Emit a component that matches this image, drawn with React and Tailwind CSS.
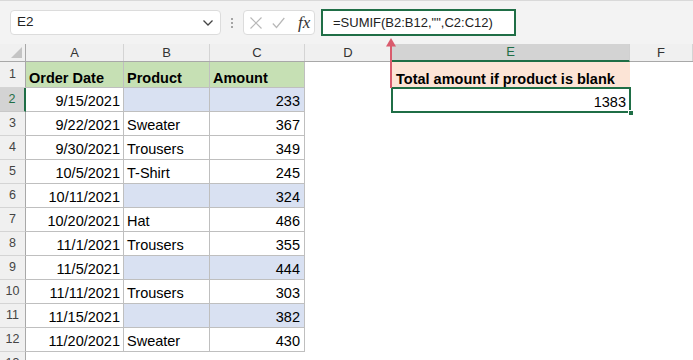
import React from 'react';

const COLS = [
  { key: 'A', w: 'w-[98px]' },
  { key: 'B', w: 'w-[86px]' },
  { key: 'C', w: 'w-[95px]' },
  { key: 'D', w: 'w-[87px]' },
  { key: 'E', w: 'w-[238px]' },
  { key: 'F', w: 'w-[63px]' },
];

const rows = [
  ['9/15/2021', '', 233],
  ['9/22/2021', 'Sweater', 367],
  ['9/30/2021', 'Trousers', 349],
  ['10/5/2021', 'T-Shirt', 245],
  ['10/11/2021', '', 324],
  ['10/20/2021', 'Hat', 486],
  ['11/1/2021', 'Trousers', 355],
  ['11/5/2021', '', 444],
  ['11/11/2021', 'Trousers', 303],
  ['11/15/2021', '', 382],
  ['11/20/2021', 'Sweater', 430],
];

const FormulaBar = () => (
  <div className="h-[44px] bg-[#f3f3f3] border-t border-[#d9d9d9] flex items-center pl-[10px]">
    {/* name box */}
    <div className="w-[211px] h-[25px] bg-white border border-[#dcdcdc] rounded-[4px] flex items-center justify-between pl-[6px] pr-[6px]">
      <span className="text-[13.5px] text-[#222]">E2</span>
      <svg width="12" height="8" viewBox="0 0 12 8">
        <path d="M1.5 1.5 L6 6 L10.5 1.5" fill="none" stroke="#444" strokeWidth="1.3" />
      </svg>
    </div>
    <div className="w-[22px] flex flex-col items-center gap-[2px]">
      <span className="w-[2px] h-[2px] bg-[#8a8a8a] rounded-full" />
      <span className="w-[2px] h-[2px] bg-[#8a8a8a] rounded-full" />
      <span className="w-[2px] h-[2px] bg-[#8a8a8a] rounded-full" />
    </div>
    {/* cancel / enter / fx */}
    <div className="w-[72px] h-[25px] bg-white border border-[#dcdcdc] rounded-[4px] flex items-center pl-[4px]">
      <svg width="14" height="14" viewBox="0 0 14 14" className="ml-[1px]">
        <path d="M1.5 1.5 L12.5 12.5 M12.5 1.5 L1.5 12.5" stroke="#b8b8b8" strokeWidth="1.2" />
      </svg>
      <svg width="13" height="12" viewBox="0 0 13 12" className="ml-[9px]">
        <path d="M0.8 6.5 L4.5 10.5 L12.3 1" fill="none" stroke="#b8b8b8" strokeWidth="1.2" />
      </svg>
      <span className="ml-[13px] font-['Liberation_Serif',serif] italic text-[17px] leading-none text-[#333]">fx</span>
    </div>
    {/* formula input */}
    <div className="ml-[6px] w-[195px] h-[27px] bg-white border-2 border-[#1f6e46] flex items-center pl-[10px]">
      <span className="text-[13px] text-[#222]">=SUMIF(B2:B12,"",C2:C12)</span>
    </div>
  </div>
);

const HeaderRow = () => (
  <div className="flex h-[18px] bg-[#f0f0f0] border-b border-[#a8a8a8]">
    <div className="w-[26px] border-r border-[#a8a8a8] flex items-end justify-end pr-[3px] pb-[3px]">
      <svg width="11" height="11" viewBox="0 0 11 11">
        <path d="M11 0 L11 11 L0 11 Z" fill="#c4c4c4" />
      </svg>
    </div>
    {COLS.map((c) =>
      c.key === 'E' ? (
        <div
          key={c.key}
          className={`${c.w} bg-[#d3d3d3] border-r border-[#d0d0d0] border-b-2 border-b-[#1f6e46] -mb-[1px] flex items-center justify-center text-[13px] text-[#1f6e46]`}
        >
          {c.key}
        </div>
      ) : (
        <div
          key={c.key}
          className={`${c.w} border-r border-[#d4d4d4] flex items-center justify-center text-[13px] text-[#333]`}
        >
          {c.key}
        </div>
      )
    )}
  </div>
);

const RowHead = ({ n, active, h }) => (
  <div
    className={`w-[26px] ${h} shrink-0 flex items-center justify-center text-[12.5px] ${
      active
        ? 'bg-[#d3d3d3] text-[#1f6e46] border-r-2 border-r-[#1f6e46] border-b border-b-[#c8c8c8]'
        : 'bg-[#f0f0f0] text-[#444] border-r border-r-[#a8a8a8] border-b border-b-[#d4d4d4]'
    }`}
  >
    {n}
  </div>
);

const cell = 'border-r border-b border-[#bfbfbf] flex items-end text-[14.5px] leading-[16px] text-black';

export default function App() {
  return (
    <div className="w-[693px] h-[360px] overflow-hidden bg-white relative font-['Liberation_Sans',Arial,sans-serif]">
      <FormulaBar />
      <HeaderRow />

      {/* row 1 */}
      <div className="flex h-[26px]">
        <RowHead n={1} h="h-[26px]" />
        <div className={`${cell} w-[98px] bg-[#c6e0b4] font-bold pl-[3px] pb-[1px]`}>Order Date</div>
        <div className={`${cell} w-[86px] bg-[#c6e0b4] font-bold pl-[3px] pb-[1px]`}>Product</div>
        <div className={`${cell} w-[95px] bg-[#c6e0b4] font-bold pl-[3px] pb-[1px]`}>Amount</div>
        <div className="w-[87px]" />
        <div className="w-[238px] bg-[#fce4d6] flex items-end pl-[4px] pb-[1px] text-[14.5px] leading-[16px] font-bold text-black">
          Total amount if product is blank
        </div>
        <div className="w-[63px]" />
      </div>

      {rows.map(([date, product, amount], i) => {
        const blank = product === '';
        return (
          <div key={i} className="flex h-[24px]">
            <RowHead n={i + 2} active={i === 0} h="h-[24px]" />
            <div className={`${cell} w-[98px] justify-end pr-[3px] pb-[2px]`}>{date}</div>
            <div className={`${cell} w-[86px] pl-[3px] pb-[2px] ${blank ? 'bg-[#d9e1f2]' : ''}`}>{product}</div>
            <div className={`${cell} w-[95px] justify-end pr-[4px] pb-[2px] ${blank ? 'bg-[#d9e1f2]' : ''}`}>{amount}</div>
            <div className="w-[87px]" />
            {i === 0 ? (
              <div className="w-[238px] relative flex items-end justify-end pr-[4px] pb-[2px] text-[14.5px] leading-[16px] text-black">
                1383
                <div className="absolute -top-[1px] -left-[1px] -right-[1px] -bottom-[1px] border-2 border-[#1f6e46]" />
                <div className="absolute -right-[4px] -bottom-[4px] w-[6px] h-[6px] bg-[#1f6e46] border border-white" />
              </div>
            ) : (
              <div className="w-[238px]" />
            )}
            <div className="w-[63px]" />
          </div>
        );
      })}

      <div className="flex h-[24px]">
        <RowHead n={13} h="h-[24px]" />
      </div>

      {/* arrow from the result header to the formula */}
      <svg className="absolute left-[385px] top-[36px]" width="12" height="52" viewBox="0 0 12 52">
        <line x1="6" y1="8" x2="6" y2="52" stroke="#d95b6d" strokeWidth="2" />
        <path d="M1 10.5 L6 2 L11 10.5 Z" fill="#d95b6d" />
      </svg>
    </div>
  );
}
